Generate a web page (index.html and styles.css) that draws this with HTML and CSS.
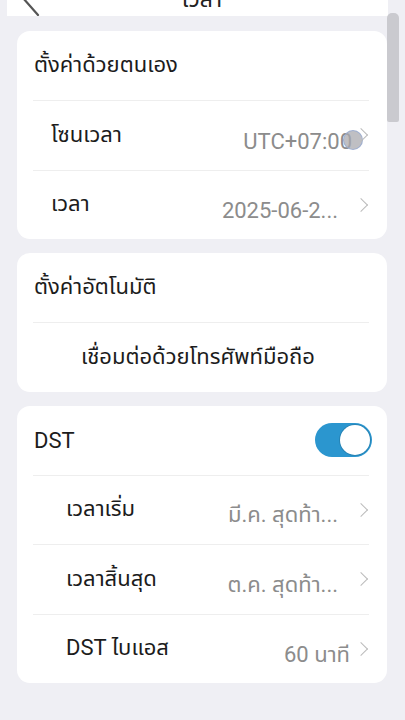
FILE: index.html
```html
<!DOCTYPE html>
<html lang="th">
<head>
<meta charset="utf-8">
<link rel="stylesheet" href="styles.css">
</head>
<body>
<div class="screen">
  <div class="topbar">
    <div class="back">
      <svg width="24" height="16" viewBox="0 0 24 16"><path d="M1 -2 L16 15" stroke="#555" stroke-width="2.2" fill="none" stroke-linecap="round"/></svg>
    </div>
    <div class="title">เวลา</div>
  </div>

  <div class="card">
    <div class="row head"><span class="label">ตั้งค่าด้วยตนเอง</span></div>
    <div class="row sub1">
      <span class="label">โซนเวลา</span>
      <span class="value utc">UTC+07:00<span class="touch"></span></span>
      <span class="chev"></span>
    </div>
    <div class="row sub1">
      <span class="label">เวลา</span>
      <span class="value">2025-06-2...</span>
      <span class="chev"></span>
    </div>
  </div>

  <div class="card">
    <div class="row head"><span class="label">ตั้งค่าอัตโนมัติ</span></div>
    <div class="row center"><span class="label">เชื่อมต่อด้วยโทรศัพท์มือถือ</span></div>
  </div>

  <div class="card">
    <div class="row head">
      <span class="label">DST</span>
      <span class="toggle"><span class="knob"></span></span>
    </div>
    <div class="row sub2">
      <span class="label">เวลาเริ่ม</span>
      <span class="value">มี.ค. สุดท้า...</span>
      <span class="chev"></span>
    </div>
    <div class="row sub2">
      <span class="label">เวลาสิ้นสุด</span>
      <span class="value">ต.ค. สุดท้า...</span>
      <span class="chev"></span>
    </div>
    <div class="row sub2">
      <span class="label">DST ไบแอส</span>
      <span class="value min">60 นาที</span>
      <span class="chev"></span>
    </div>
  </div>

  <div class="scrollbar"></div>
</div>
</body>
</html>
```
FILE: styles.css
```css
* { box-sizing: border-box; }
html, body {
  margin: 0;
  padding: 0;
  background: #efeff4;
}
body {
  font-family: Roboto, "Noto Sans Thai", "Noto Sans", sans-serif;
  color: #1c1c1c;
}
.screen {
  position: relative;
  width: 405px;
  height: 720px;
  overflow: hidden;
  padding: 0 18px 0 17px;
}
.topbar {
  height: 16px;
  margin: 0 0 15px -10px;
  width: 381px;
  background: #fff;
  overflow: hidden;
  display: flex;
  align-items: flex-start;
}
.back {
  width: 60px;
  height: 16px;
  padding-left: 15px;
  flex: none;
}
.back svg { display: block; }
.title {
  flex: 1;
  text-align: center;
  font-size: 23px;
  line-height: 23px;
  height: 23px;
  margin-top: -12px;
  margin-right: 51px;
  color: #222;
}
.card {
  background: #fff;
  border-radius: 13px;
  margin-bottom: 14px;
  padding: 0 18px 0 16px;
}
.row {
  height: 69.5px;
  display: flex;
  align-items: center;
  border-top: 1px solid #eeeeee;
  font-size: 22px;
}
.row:first-child { border-top: none; }
.row.head { height: 69px; padding-left: 1px; }
.row.head .label { flex: 1; }
.sub1 .label { padding-left: 18px; }
.sub2 .label { padding-left: 33px; }
.row .label { flex: 1; white-space: nowrap; }
.row.center { justify-content: center; }
.row.center .label { flex: none; margin-left: -6px; }
.value {
  color: #8c8c8c;
  font-size: 22px;
  padding-top: 12px;
  white-space: nowrap;
  position: relative;
}
.value.min { padding-top: 14px; }
.chev {
  width: 10px;
  height: 10px;
  border-top: 1.4px solid #bbbbbb;
  border-right: 1.4px solid #bbbbbb;
  transform: rotate(45deg);
  margin-left: 18px;
  margin-right: 3px;
}
.utc + .chev { margin-left: 4px; }
.min + .chev { margin-left: 6px; }
.touch {
  position: absolute;
  right: -11px;
  top: 13px;
  width: 20px;
  height: 20px;
  border-radius: 50%;
  background: rgba(170,170,175,0.75);
  border: 1px solid rgba(150,170,210,0.8);
}
.toggle {
  width: 57px;
  height: 34px;
  border-radius: 17px;
  background: #2b96cf;
  position: relative;
  margin-right: -3px;
}
.knob {
  position: absolute;
  right: 2px;
  top: 2px;
  width: 30px;
  height: 30px;
  border-radius: 50%;
  background: #fff;
  box-shadow: 0 0 0 1px rgba(0,0,0,0.12);
}
.scrollbar {
  position: absolute;
  left: 387px;
  top: 13px;
  width: 12px;
  height: 109px;
  background: #cacacf;
  border-radius: 5px 5px 2px 2px;
}
```
